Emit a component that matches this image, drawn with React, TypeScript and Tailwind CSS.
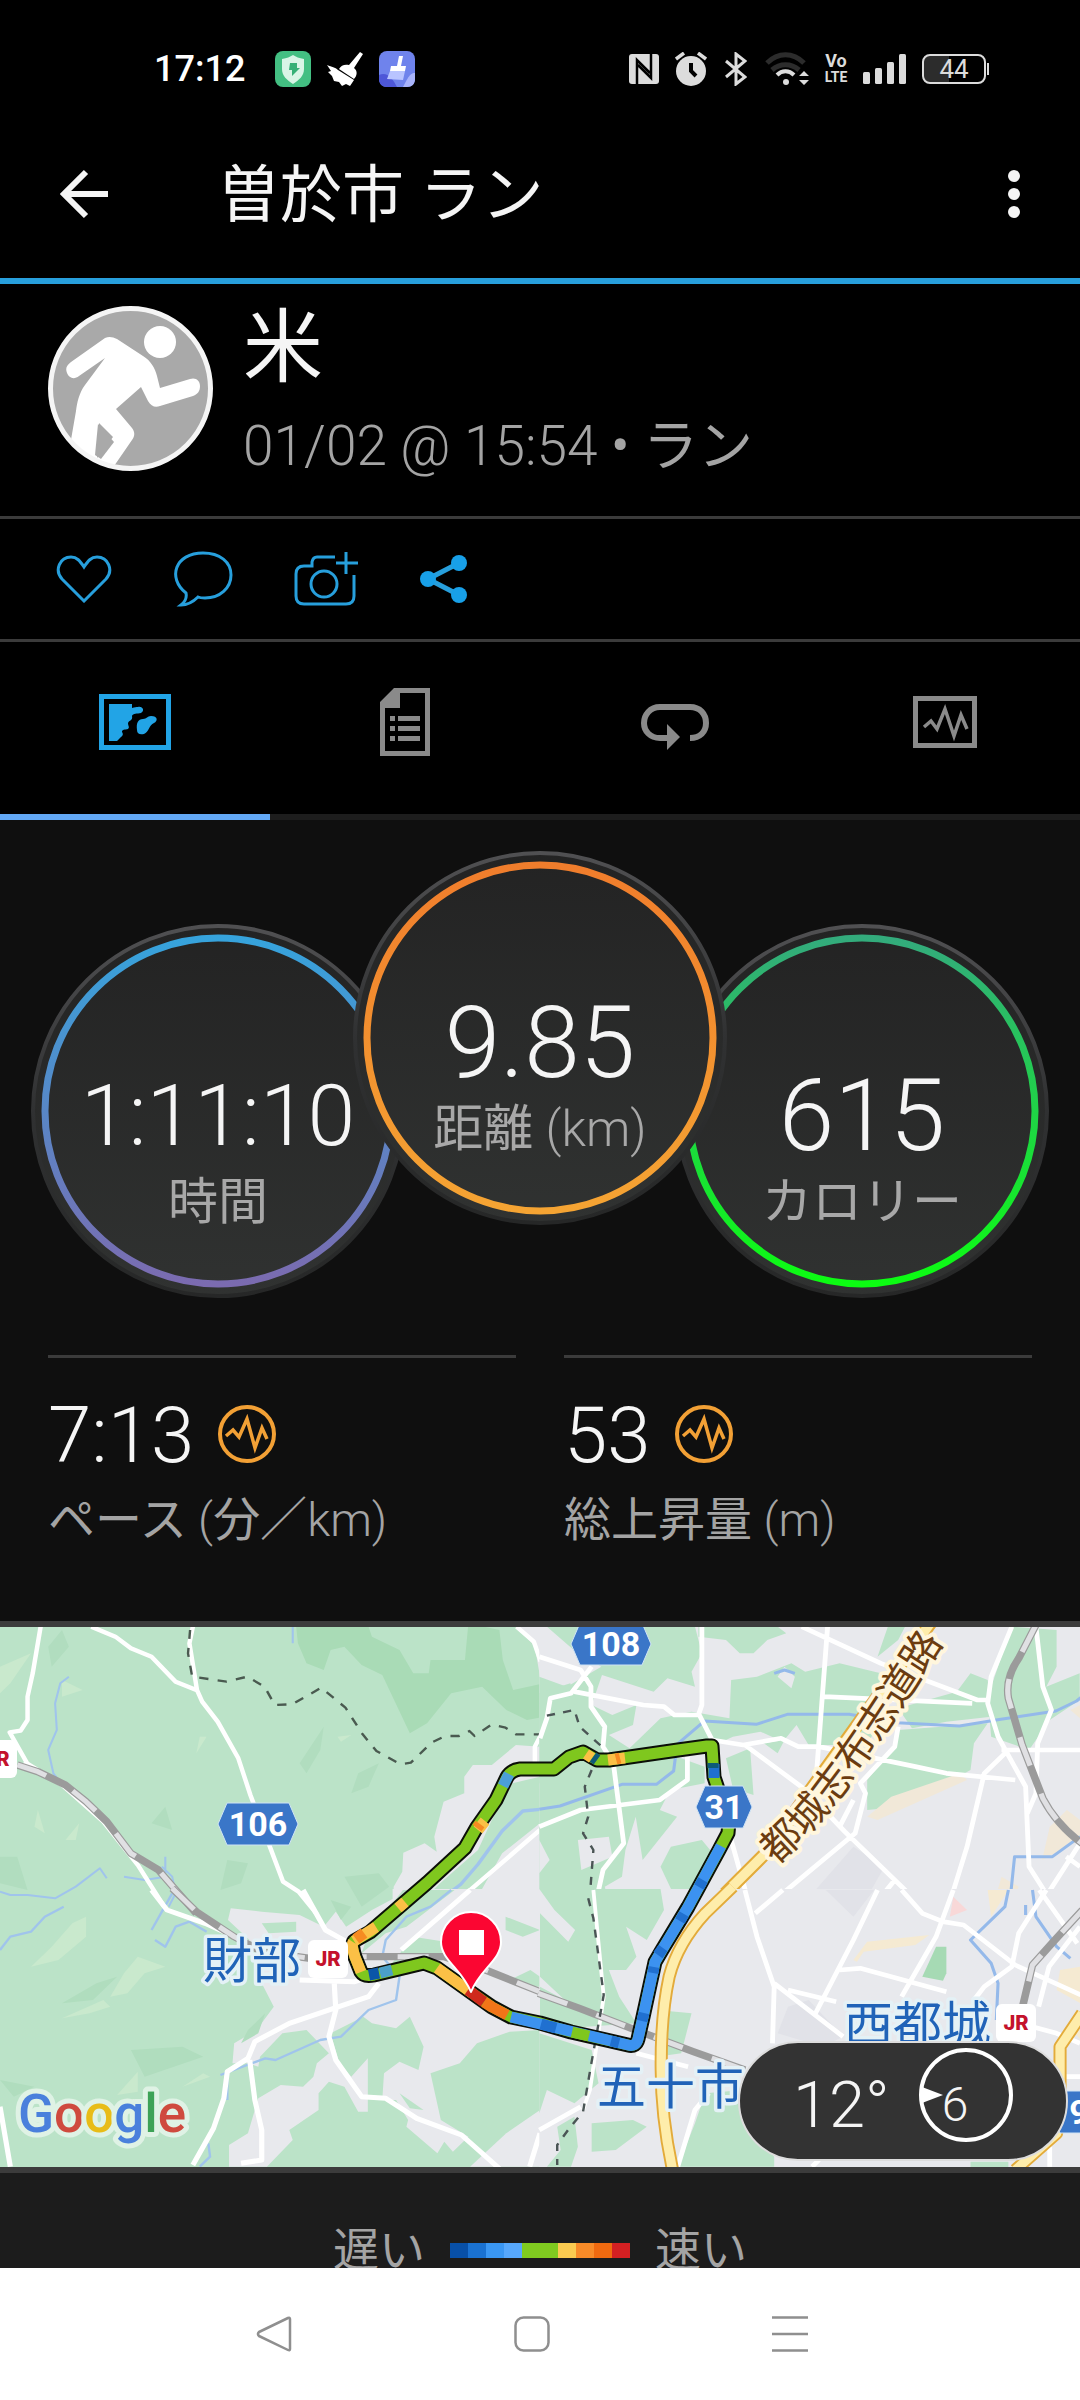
import React, { useState } from 'react';
import clsx from 'clsx';

// Latin runs are set light, Japanese runs stay regular
const MixedText: React.FC<{ children: string }> = ({ children }) => (
  <>
    {children.split(/([\x20-\x7e]+)/).map((part, i) => (
      <span key={i} className={i % 2 ? 'font-light' : 'font-normal'}>
        {part}
      </span>
    ))}
  </>
);

const RingStat: React.FC<{
  id: string;
  value: string;
  label: string;
  from: string;
  to: string;
  className?: string;
  valueClass?: string;
}> = ({ id, value, label, from, to, className, valueClass = 'text-[100px]' }) => (
  <div className={clsx('relative w-[374px] h-[374px] shrink-0', className)}>
    <svg viewBox="0 0 374 374" className="absolute inset-0 w-full h-full" aria-hidden="true">
      <defs>
        <linearGradient id={`${id}-ring`} x1="0" y1="0" x2="0" y2="1">
          <stop offset="0" stopColor={from} />
          <stop offset="1" stopColor={to} />
        </linearGradient>
        <linearGradient id={`${id}-fill`} x1="0" y1="0" x2="0" y2="1">
          <stop offset="0" stopColor="#232323" />
          <stop offset="1" stopColor="#303231" />
        </linearGradient>
        <linearGradient id={`${id}-edge`} x1="0" y1="0" x2="0" y2="1">
          <stop offset="0" stopColor="#505052" />
          <stop offset="0.5" stopColor="#303132" />
          <stop offset="1" stopColor="#262727" />
        </linearGradient>
      </defs>
      <circle cx="187" cy="187" r="185" fill={`url(#${id}-fill)`} stroke={`url(#${id}-edge)`} strokeWidth="4" />
      <circle cx="187" cy="187" r="173" fill="none" stroke={`url(#${id}-ring)`} strokeWidth="7" />
    </svg>
    <div className="relative flex flex-col items-center pt-[142px] whitespace-nowrap">
      <div className={clsx('leading-[100px] font-light text-[#f5f5f5]', valueClass)}>{value}</div>
      <div className="text-[50px] leading-[72px] text-[#a8a8a8]">
        <MixedText>{label}</MixedText>
      </div>
    </div>
  </div>
);

const SummaryStat: React.FC<{ value: string; label: string }> = ({ value, label }) => (
  <div className="flex-1 border-t-3 border-[#3b3b3b] pt-[38px] whitespace-nowrap">
    <div className="flex items-center gap-6">
      <span className="text-[78px] leading-[80px] font-light text-[#f5f5f5]">{value}</span>
      <button aria-label="グラフ" className="pb-1">
        <svg viewBox="0 0 58 58" className="w-[58px] h-[58px] block" fill="none" stroke="#f2a035">
          <circle cx="29" cy="29" r="27" strokeWidth="4" />
          <path d="M8 31l7-6 6 7 8-18 8 29 7-20 5 11" strokeWidth="3.5" />
        </svg>
      </button>
    </div>
    <div className="mt-2 text-[47px] leading-[72px] text-[#a4a4a4]">
      <MixedText>{label}</MixedText>
    </div>
  </div>
);

const StatusBar: React.FC = () => (
  <div className="flex items-center justify-between h-[110px] pt-7 pl-[154px] pr-[91px]">
    <div className="flex items-center">
      <span className="text-[36px] leading-10 font-medium text-white">17:12</span>
      <svg viewBox="0 0 36 36" className="w-9 h-9 ml-[30px]">
        <rect width="36" height="36" rx="8" fill="#43bf82" />
        <path d="M18 4c3 2 6 3 11 4v10c0 7-5 11-11 15C12 29 7 25 7 18V8c5-1 8-2 11-4z" fill="#d8f5e6" />
        <path d="M15 12h7v5h3l-8 8v-6h-3z" fill="#35b076" />
      </svg>
      <svg viewBox="0 0 36 36" className="w-9 h-9 ml-4" fill="#fff">
        <path d="M33 1l3 2-9 14c4 3 3 8 0 11L12 18c2-4 6-5 10-4z" />
        <path d="M0 14c5 2 8 2 11 5l16 10-4 6-4-2-4 2-3-4-5-1-2-5-4-4 3-1z" />
      </svg>
      <svg viewBox="0 0 36 36" className="w-9 h-9 ml-4">
        <rect width="36" height="36" rx="8" fill="#6f83ec" />
        <path d="M0 24c8-4 14 4 18 12H8c-5 0-8-3-8-8z" fill="#4d57d8" />
        <path d="M24 36c6-12 8-14 12-14v6c0 5-3 8-8 8z" fill="#a9b4fb" />
        <path d="M20 5h4l-2 10h5l-1 5H11l1-5h6z" fill="#fff" />
        <path d="M11 20h15l-2 9-16-1z" fill="#b9c4ff" />
      </svg>
    </div>
    <div className="flex items-center text-[#dcdcdc]">
      <svg viewBox="0 0 30 30" className="w-[30px] h-[30px]" fill="currentColor">
        <rect width="30" height="30" rx="3" />
        <path d="M8 30V6l13 13M22 0v24L9 11" fill="none" stroke="#000" strokeWidth="2.5" />
      </svg>
      <svg viewBox="0 0 32 34" className="w-8 h-[34px] ml-4" fill="currentColor">
        <circle cx="16" cy="19" r="15" />
        <path d="M1 7l8-6M31 7l-8-6" stroke="currentColor" strokeWidth="3.5" />
        <path d="M16 11v8l5 5" fill="none" stroke="#000" strokeWidth="4" />
      </svg>
      <svg viewBox="0 0 22 34" className="w-[22px] h-[34px] ml-[18px]" fill="none" stroke="currentColor" strokeWidth="3">
        <path d="M1 9l19 16-9 7V2l9 7L1 25" />
      </svg>
      <svg viewBox="0 0 45 34" className="w-[45px] h-[34px] ml-[18px]" fill="none" strokeWidth="5">
        <path d="M2 11c11-11 26-11 37 0" stroke="#2c2c2c" />
        <path d="M7 18c8-7 19-7 27 0" stroke="#2c2c2c" />
        <path d="M12 23c5-5 12-5 17 0" stroke="currentColor" strokeWidth="4" />
        <circle cx="21" cy="30" r="3" fill="currentColor" />
        <path d="M34 24l5-5 5 5zM34 28l5 5 5-5z" fill="currentColor" />
      </svg>
      <div className="ml-3 w-7 text-[18px] leading-[16px] font-bold text-center">
        <div>Vo</div>
        <div className="text-[14px]">LTE</div>
      </div>
      <svg viewBox="0 0 43 30" className="w-[43px] h-[30px] ml-[13px]" fill="currentColor">
        <rect x="0" y="18" width="7" height="12" rx="1.5" />
        <rect x="12" y="14" width="7" height="16" rx="1.5" />
        <rect x="24" y="8" width="7" height="22" rx="1.5" />
        <rect x="36" y="0" width="7" height="30" rx="1.5" />
      </svg>
      <div className="ml-4 flex items-center">
        <div className="w-16 h-[30px] rounded-lg border-2 border-current bg-linear-to-r from-[#2c2c2c] from-42% to-black to-42% text-[26px] leading-[26px] text-center">
          44
        </div>
        <div className="w-[2px] h-3 bg-current ml-px" />
      </div>
    </div>
  </div>
);

const RunnerAvatar: React.FC = () => (
  <svg viewBox="0 0 165 165" className="w-[165px] h-[165px] shrink-0">
    <clipPath id="avatar-clip">
      <circle cx="82.5" cy="82.5" r="80" />
    </clipPath>
    <circle cx="82.5" cy="82.5" r="80" fill="#a9a9a9" />
    <g clipPath="url(#avatar-clip)" fill="#fff">
      <circle cx="112" cy="36" r="16" />
      <path d="M57 32c4-2 8-1 12 1l26 17c8 5 12 12 14 20l3 12 30-9c6-2 10 2 10 7s-2 8-7 10l-33 10c-5 2-9 0-12-5l-7-14-25 22 16 19c3 4 3 8 0 12l-20 29-18 8-26-20 8-46c1-8 3-18 9-26l20-27-26 18c-5 4-10 2-12-3s0-8 4-11z" />
      <path d="M51 117l14 14-16 21z" fill="#a9a9a9" />
      <path d="M50 118l-3 31 6 4 13-17z" fill="#a9a9a9" />
    </g>
    <circle cx="82.5" cy="82.5" r="80" fill="none" stroke="#f5f5f5" strokeWidth="5" />
  </svg>
);

const tabs = [
  {
    label: '地図',
    icon: (
      <svg viewBox="0 0 72 56" className="w-[72px] h-14">
        <rect x="2.5" y="2.5" width="67" height="51" fill="none" stroke="currentColor" strokeWidth="5" />
        <path d="M10 10h23v4c3-1 4-1 6-1 5-1 7 4 3 6-4 1-8 0-9 3 1 5-3 4-4 7 0 3 2 4 0 6-3 1-6 0-6 3 2 3 0 4-2 6l-3 3h-8z" fill="currentColor" />
        <path d="M38 36c-1-7 1-11 6-11 4 0 4-3 8-3 7 0 7 5 3 7-5 2-5 9-10 11-4 1-7 0-7-4z" fill="currentColor" />
      </svg>
    ),
  },
  {
    label: '統計',
    icon: (
      <svg viewBox="0 0 50 68" className="w-[50px] h-[68px]" fill="currentColor">
        <path d="M14 0h36v68H0V14zM20 5v15H5v43h40V5z" fillRule="evenodd" />
        <path d="M10 28h5v5h-5zM18 28h22v5H18zM10 38h5v5h-5zM18 38h22v5H18zM10 48h5v5h-5zM18 48h22v5H18z" />
      </svg>
    ),
  },
  {
    label: 'ラップ',
    icon: (
      <svg viewBox="0 -10 68 58" className="w-[68px] h-[58px]">
        <path d="M27 35h-8C9 35 3 28 3 20S9 4 19 4h30c10 0 16 7 16 16s-6 15-16 15" fill="none" stroke="currentColor" strokeWidth="6" />
        <path d="M26 21l13 13-13 13z" fill="currentColor" />
      </svg>
    ),
  },
  {
    label: 'グラフ',
    icon: (
      <svg viewBox="0 0 64 52" className="w-16 h-[52px]" fill="none" stroke="currentColor">
        <rect x="2.5" y="2.5" width="59" height="47" strokeWidth="5" />
        <path d="M11 31l7-6 6 8 8-20 9 27 7-21 6 14" strokeWidth="3.5" />
      </svg>
    ),
  },
];

const Shield: React.FC<{ x: number; y: number; w: number; label: string }> = ({ x, y, w, label }) => (
  <g transform={`translate(${x} ${y})`}>
    <path
      d={`M${-w} 0l9-21h${2 * w - 18}l9 21-9 21h${18 - 2 * w}z`}
      fill="#3a76c8"
      stroke="#cfe3f4"
      strokeWidth="1"
    />
    <text y="12" textAnchor="middle" fontSize="34" fontWeight="700" fill="#fff">
      {label}
    </text>
  </g>
);

const Station: React.FC<{ x: number; y: number }> = ({ x, y }) => (
  <g transform={`translate(${x} ${y})`}>
    <rect x="-20" y="-19" width="40" height="38" rx="6" fill="#fff" />
    <text y="7" textAnchor="middle" fontSize="20" fontWeight="800" fontFamily="Inter, sans-serif" fill="#c4122c">
      JR
    </text>
  </g>
);

const rail = (d: string) => (
  <>
    <path d={d} stroke="#9b9b9b" strokeWidth="22" />
    <path d={d} stroke="#e0e0e3" strokeWidth="15" strokeDasharray="90 90" />
  </>
);

const ROUTE =
  'M712 119L707 119L678 123L609 133L597 133L583 125L569 130L554 142L520 142Q511 143 507 150L496 173L477 200L465 221L427 256L370 305L354 314Q351 318 355 330L361 345Q364 350 374 348L424 336L437 341L472 366L492 380L511 390L540 396L571 405L628 418Q636 420 638 412L643 390L655 335L662 323L688 280L719 223L728 206L729 195L714 150Z';

const RouteMap: React.FC = () => (
  <svg
    viewBox="0 0 1080 540"
    preserveAspectRatio="xMidYMid slice"
    className="block w-full h-[540px] bg-[#bbe3c8]"
    fill="none"
    strokeLinejoin="round"
    fontFamily="Roboto, 'Noto Sans CJK JP', sans-serif"
    role="img"
    aria-label="ルートマップ"
  >
    {/* north-west tile */}
    <g transform="translate(0 -17) scale(0.3444 0.3333)">
      <path d="M860 50l5 50 25 60 50 20 20-60 40-10 50 55 60 30 80 175 50-30 70-90 90-20 70 70 60 30 50-10v-100l-90 20-30-90-10-90-90-20-10 110-100 0-5 40h-45l-40-70-80-40-10-30z" fill="#a9dbb6" />
      <path d="M940 350l-70 110 20 30 40-70zM660 750l-20 90 60-20 20-60zM1000 800l100-10 30 40-80 60zM480 590l-40 50 60 20zM1040 490l60-30-30 70-50 20zM0 740l50 0 30 100-80-20zM180 60l20 50-50 60-10-60z" fill="#b1ddbf" />
      <path d="M0 170l90-40-60 90-30 30zM180 210l60 30-60 20zM110 600l20 70-30-20zM580 380l20 0-30 50zM230 640l-40 50 30 0zM980 380l40-5-30 20z" fill="#c9e9cd" />
      <path d="M1568 410l-70-5-70 60h-55l-25 35v50l-60 25-27 105 7 45-35-25-62 28-3 57-25 45v70h430z" fill="#e8e9ed" />
      <path d="M1568 500l-80 20-60 110-40 90-110 100-80 80h120l80-60 60-110 110-90z" fill="#bbe3c8" />
      <path d="M1568 50h-65l50 60 15 90z" fill="#e8e9ed" />
      <path d="M850 50v50M200 200l-25 20-15 60 5 80-25 60 15 70 15 20M0 845l30 10 50 0 80 10 60-35 70-55 20 30M360 800l60 10 60-10v-60M490 890l20-40-10-50-30-30" stroke="#a0c4ec" strokeWidth="6" />
      <path d="M1568 598l-50 5-60 60-70 100-50 60-90 70-50 10" stroke="#a0c4ec" strokeWidth="10" />
      <path d="M118 50L95 190l-15 70v70l-20 32-32 5 52 95M265 50l70 30 45 35 60 25 70 75 60 25M560 50l-10 50 22 140 15 35 45 60 60 110 35 110 95 260 45 30 55 70M70 455l110 70 120 110 100 130 80 130M1568 660l-270 240M1500 50l50 45 20 60M1568 380l-15 30v55" stroke="#fff" strokeWidth="13" />
      {rail('M50 465l60 20 80 40 60 50 60 60 70 95 80 50 50 60 60 70')}
      <path d="M552 60l-6 70 12 70 100 15 60-15 50 30 30 55 50-2 85-50 70 60 50 80 40 50 70 40 30-5 60-60 40-20h40l30-15 15 15 50-35 40 10 30 20h120" stroke="#4a5a50" strokeWidth="7" strokeDasharray="27 27" />
    </g>

    {/* north-east tile */}
    <g transform="translate(540 -17) scale(0.3444 0.3333)">
      <path d="M-2 50h1572v860H-2z" fill="#e8e9ed" />
      <path d="M20 50h430l20 80-30 55 10 45-80-25-40 40-150-50-30 90 60 30 70-30-10 60-70 30 60 40 90-90 90-20 110 20 5-115 75-10 100-40 40 25 100-25 140 35-30 150-30 60H780l-35-60-40 50-65-30-80 15-40 20-140 30-200 40L-2 520V200l80 30 100-60-80-50z" fill="#bbe3c8" />
      <path d="M-2 250l90-30 20 60-80 50-30 60zM460 80l80 10 40 40h40l40-40 55-20-25-20H460zM1040 90l-60 50 30-90h50zM1040 360l260-20-40 60-10 80-70 40-130 70-100 10v-90l80-100zM1250 190l50 20 10 110-130 15-100 20-40-60 170-50zM1370 50l130 10v110l-30 60 97-40v80l-87 60-60 90-110-40-10-120zM650 400l60-10-20 40zM540 445l70-30 10 140-60-20z" fill="#bbe3c8" />
      <path d="M-2 470l400-30 80 30v50l-100 20-30 60 50 20-100 130-20-130-30 100-10 80-50 30 10 40 160-30 0 70H-2z" fill="#bbe3c8" />
      <path d="M-2 690l30 60-30 40zM110 690l90-10 10 60-90 40zM690 200l20-30 30 30-10 35z" fill="#e8e9ed" />
      <path d="M350 770l30-60 90-20 40 50-60 120-50 20z" fill="#bbe3c8" />
      <path d="M1020 560l200-70 20 20-260 120-30-10zM1480 650l50-50 38 30v60l-110 60zM1340 800l50 30-40 80h-40zM1540 300l28-15v40z" fill="#f1e8d8" />
      <path d="M910 710l90 60-60 110-140-40z" fill="#e1e2e8" />
      <path d="M1180 900l20-40 40 40z" fill="#f8d8d8" />
      <path d="M-2 598l60-10 180-65h100l50-40 10-80 80-70 150 10 90-30h180l140 25 180 10 120-20 160-25 60-30 70-60M680 190l30-10 30 10M1568 680l-80 60h-110l-10 100-30 70" stroke="#94b9ea" strokeWidth="9" />
      <path d="M-2 140l120 40 30 50v60l40 60-5 60 30 50 30 240-60 80-30 140M150 170l-60 80-60 15-10 60-20 60M100 245l200 40 60 5 30 25h70l10-30V50M460 310l40 80 90 15 110-20 50 25 60 0 280 60 90 20 200 20M-2 650l120-50 230-30 80-60v-70M595 405l170 130 120 130 240 240M835 50l-35 480M760 50l230 110 280 110h30M825 260l430 20M1370 50l-60 150-10 80 30 100 80 150 10 240 80 130M1340 420h230M1350 430l-60 60-50 220-60 200M1440 50l20 180 25 70-40 100-5 150-25 60M1040 350l-10 60-100 110 15 30-30 120-280 240M870 650l40-80M555 690l60 220M1030 810l-70 90M1568 700l-130 210M1568 770l-40-30" stroke="#fff" strokeWidth="14" />
      {rail('M1440 45l-50 100q-40 60-30 120l40 140 60 160q40 80 120 140')}
      <path d="M20 317l80-17 15 50 70 65M150 480l-20 50 10 90-15 50 30 50-12 160" stroke="#4a5555" strokeWidth="7" strokeDasharray="24 24" />
      <path d="M1140 30L650 735L480 910" stroke="#e3ab3a" strokeWidth="40" />
      <path d="M1140 30L650 735L480 910" stroke="#feedab" strokeWidth="28" />
    </g>

    {/* south-west tile */}
    <g transform="translate(0 263) scale(0.3444 0.3333)">
      <path d="M1140-3v30l-60 33-75 50-30-45-35 45-70-35-110-10-90-10-8 35 83 80 15 110 35 70-50 70-65 40-5 60h45l30 10 5-30 65-70 70-10 65 70-35 30-10 40-30 30-65-5-65 40-30 105-55 35v65h110l75-80-10-30 85-60v-50l30-35 45 15 40 75h28v-35h82l35 60-5 20 90 80 20-35 25 30 45-45-80-50-30-140 85-30 50-60 95-35 90-5V-3z" fill="#e8e9ed" />
      <path d="M960 430l95-50 25 20 70 15 40-35 40 90-15 70-55-25-45 35-5 80h-42V505l-48 55-35-40zM760 100l100-5v30l-80 5zM1480 270l60-30 28 20v30h-60zM1170 0l150 0-140 110-60 20-70 60 20-60zM1200 140l120 20 20 70-100-40-110 40zM1160 610l70 50-40-5zM1568 120l-50 20-50-20v-40z" fill="#bbe3c8" />
      <path d="M1365 830l105-100 98-70v170z" fill="#e8e9ed" />
      <path d="M770 370l-20 60-50 30 20-40zM380 480l150-10 60 30-170 60zM0 570l100 20-60 30zM960 30l60 20-30 40zM180 340l100-60 60-20-70 70z" fill="#b0ddbe" />
      <path d="M210 100l40-20v60l-80 70-80 20 60-60zM400 200l80 30-60 20-50 60-50 10 40-70zM300 330l20 20-60 20-80 15zM400 545l-60 70 60-10zM590 550l20 10-80 30z" fill="#c9e9cd" />
      <path d="M0 180l30-40 60-15 40-45 55-30M450 150l30 20 30-60 40-15 50 30M440 120l60-110M1310 0l-60 50-70 30-60 70-10 50 50 60-10 70-80 30-80 80-60 10-130 60-30-5-130 50M660 550v80M605 760l5 40-30 30" stroke="#a0c4ec" strokeWidth="7" />
      <path d="M440 0l45 60 110 40 130 60M880 0l65 120 70 40M1365 0l-200 180M870 270l160 5 60-20M970 270l5 90-20 80 20 70 75 110 70 5 90 60 130 50 120 110M1100 280l-30 40-230 80-100 55-20 50-60 40-10 80-30 90-60 110M725 510l15 120 20 90v90l-60 10M0 650l30 180M1568 730l-30 100" stroke="#fff" strokeWidth="15" />
      {rail('M500-5l70 70 110 75 80 45 140 20 150-5 240 0 120 40 170 70')}
    </g>

    {/* south-east tile */}
    <g transform="translate(540 263) scale(0.3444 0.3333)">
      <path d="M-2-3h1572v840H-2z" fill="#e8e9ed" />
      <path d="M-2-3h352l10 63-50 90-60-40 30 90-30 40h-50l30 80 50 80-280 20V290l72 40-72-70V70l82 85 20-35-60-60zM340 360l100 10-30 120-70 10zM-2 430l152 50 20 100-70 60-80-40-22 70zM50 710l50-30 10 90-20 60H20l40-50zM150 700l120-10 40 20-90 70-70 5zM480 610l110-10 50 140 40 60v30H400l50-130zM1250 815h110v20h-110z" fill="#bbe3c8" />
      <path d="M1150 170h30v80l-10 22-60-12z" fill="#a6dab4" />
      <path d="M1300 0h60l-50 80zM910 210l40-55 180-20-40 30-150 20-20 30zM1510 240l60-10v110l-70-40zM1530 400l40 20v30z" fill="#f5ead2" />
      <path d="M1200 20l40 40-50 20z" fill="#f8d8d8" />
      <path d="M720 350l60-20 100 110-60 30-130-40zM830 0h140l-60 80z" fill="#e1e2e8" />
      <path d="M1360 0l-10 50-100 100 60 70 20 60-5 110M1410 45v30M1430 0l10 80 60 90 40 35" stroke="#94b9ea" strokeWidth="9" />
      <path d="M595 0l35 140 50 150-5 170M680 280l200 160M720 300l140 35M625 70l80-70M980 0l-70 150-110 220M870 240l60-5 250 70M1050 0l60 70 60 25 60 10 150 120 190 90M1200 0l-50 140-100 180M1470 0l-80 130-20 100-80 60-30 40M1450 0l110 160M1568 110l-90 120-30 120M1430 410l70 20 68 30M280 490l150 40M400 830l50-170 40-50M-2 720l120-70M1480 770v60M790 830l20-20M1568 560l-50 0" stroke="#fff" strokeWidth="14" />
      <path d="M155 0l30 320-40 280-20 60" stroke="#fff" strokeWidth="11" />
      {rail('M-5 310l120 45 150 60 180 70 150 55')}
      {rail('M1575 60l-80 90-65 75-30 130')}
      <path d="M140 25l15 60 30 230-35 200-25 150-40 50-35 50v60" stroke="#4a5555" strokeWidth="7" strokeDasharray="24 24" />
      <path d="M560-10L480 70Q400 160 375 260Q350 380 352 540Q352 680 385 840M1575 370L1510 470L1510 600L1500 730L1380 840" stroke="#e3ab3a" strokeWidth="38" />
      <path d="M560-10L480 70Q400 160 375 260Q350 380 352 540Q352 680 385 840M1575 370L1510 470L1510 600L1500 730L1380 840" stroke="#feedab" strokeWidth="27" />
    </g>

    {/* pace-coloured track */}
    <path d={ROUTE} stroke="#0b0f08" strokeWidth="15" />
    <path d={ROUTE} stroke="#7fc71e" strokeWidth="11" />
    <g strokeWidth="11">
      <path d="M721 219L688 280L662 323L655 335L643 390L638 412Q636 420 628 418L511 390" stroke="#3c92f0" />
      <path d="M714 151v-14M703 253l-4 7M684 287l-4 7M663 321l-5 7M654 340l-1 6M644 386l-2 8M556 401l-15-4M619 416l-8-2" stroke="#2070d0" />
      <path d="M713 136v5M597 133l-4-3" stroke="#0e5a78" />
      <path d="M572 405l17 4" stroke="#7fc71e" />
      <path d="M353 315Q351 318 355 330L361 345M354 314L376 300M398 281l7-6M437 341L472 366M485 194L478 203M592 131l-6-4M608 133l17-2" stroke="#fbc046" />
      <path d="M356 312l8-6M477 201l3-4M616 132l4-1" stroke="#f68b22" />
      <path d="M509 147l-6 12" stroke="#4b9fd8" />
      <path d="M369 348l10-2" stroke="#0b55a8" />
      <path d="M380 346l12-3" stroke="#4b9fc8" />
      <path d="M468 363l16 12" stroke="#cf2a1c" />
      <path d="M484 375l8 5 15 8" stroke="#f27518" />
    </g>

    <g fontSize="49" fill="#2063b8" stroke="#e4f1f6" strokeWidth="7" paintOrder="stroke">
      <text x="203" y="351">財部</text>
      <text x="597" y="477">五十市</text>
      <text x="844" y="415">西都城</text>
    </g>
    <Station x={-3} y={132} />
    <Station x={328} y={332} />
    <Station x={1016} y={396} />

    <Shield x={258} y={197} w={40} label="106" />
    <Shield x={611} y={17} w={40} label="108" />
    <Shield x={724} y={180} w={28} label="31" />
    <Shield x={1079} y={485} w={28} label="9" />

    <path id="highway" d="M776 238C834 188 866 136 966-20" />
    <text fontSize="40" fill="#6b3c10" stroke="#fff6dc" strokeWidth="8" paintOrder="stroke">
      <textPath href="#highway">都城志布志道路</textPath>
    </text>

    <path d="M471 365C462 342 441 333 441 315a30 30 0 0 1 60 0c0 18-21 27-30 50z" fill="#fb0632" stroke="#fff" strokeWidth="2" />
    <path d="M459 303h25v25h-25z" fill="#fff" />

    <text x="18" y="505" fontSize="53" fontWeight="500" stroke="#dff2e5" strokeWidth="10" paintOrder="stroke">
      <tspan fill="#4a80dc">G</tspan>
      <tspan fill="#cf4a3e">o</tspan>
      <tspan fill="#e8bc18">o</tspan>
      <tspan fill="#4a80dc">g</tspan>
      <tspan fill="#3da257">l</tspan>
      <tspan fill="#cf4a3e">e</tspan>
    </text>
  </svg>
);

const paceColors = [
  'bg-[#0850a8]',
  'bg-[#1a72d2]',
  'bg-[#3a97f3]',
  'bg-[#57a8fc]',
  'bg-[#80cb20]',
  'bg-[#80cb20]',
  'bg-[#fbcb50]',
  'bg-[#f88b28]',
  'bg-[#f06a10]',
  'bg-[#d42022]',
];

export default function App() {
  const [activeTab, setActiveTab] = useState(0);

  return (
    <div className="min-h-screen flex flex-col bg-black overflow-x-hidden font-['Roboto','Noto_Sans_CJK_JP',sans-serif]">
      <StatusBar />

      <header className="flex items-center h-[174px] pl-[60px] pr-[60px] border-b-6 border-[#279fdc]">
        <button aria-label="戻る">
          <svg viewBox="0 0 50 50" className="w-[50px] h-[50px] block" fill="none" stroke="#f5f5f5" strokeWidth="6">
            <path d="M48 25H5M26 3L4 25l22 22" />
          </svg>
        </button>
        <h1 className="ml-27 pt-1 flex-1 text-[62px] leading-[80px] text-[#f5f5f5]">曽於市 ラン</h1>
        <button aria-label="メニュー">
          <svg viewBox="0 0 12 50" className="w-3 h-[50px] block" fill="#f5f5f5">
            <circle cx="6" cy="7" r="6" />
            <circle cx="6" cy="25" r="6" />
            <circle cx="6" cy="43" r="6" />
          </svg>
        </button>
      </header>

      <section className="flex gap-[30px] h-[235px] pt-[22px] pl-12 border-b-3 border-[#3b3b3b]">
        <RunnerAvatar />
        <div>
          <div className="text-[80px] leading-[84px] text-[#f5f5f5]">米</div>
          <div className="mt-4 text-[55px] leading-[80px] text-[#a4a4a4]">
            <MixedText>01/02 @ 15:54 • ラン</MixedText>
          </div>
        </div>
      </section>

      <div className="flex items-center h-[123px] pl-14 border-b-3 border-[#3b3b3b] text-[#279fdc]">
        <button aria-label="いいね">
          <svg viewBox="0 0 56 48" className="w-14 h-12 block" fill="none" stroke="currentColor" strokeWidth="3">
            <path d="M28 46L6 24C-2 15 4 2 15 2c6 0 9 4 13 10 4-6 7-10 13-10 11 0 17 13 9 22z" />
          </svg>
        </button>
        <button aria-label="コメント" className="ml-[61px]">
          <svg viewBox="0 0 60 56" className="w-15 h-14 block" fill="none" stroke="currentColor" strokeWidth="3">
            <path d="M13 42C-6 27 2 2 30 2c17 0 28 9 28 22S47 47 32 47c-3 0-5 0-7-1-4 4-9 8-17 8 4-3 6-7 5-12z" />
          </svg>
        </button>
        <button aria-label="写真を追加" className="ml-[61px]">
          <svg viewBox="0 0 64 56" className="w-16 h-14 block" fill="none" stroke="currentColor" strokeWidth="3">
            <path d="M41 6H23q-4 0-5 5v4H10q-8 0-8 8v22q0 8 8 8h42q8 0 8-8V24M52 1v22M42 12h22" />
            <circle cx="30" cy="33" r="13" />
          </svg>
        </button>
        <button aria-label="共有" className="ml-[61px]">
          <svg viewBox="0 0 48 48" className="w-12 h-12 block" fill="#18a0e8" stroke="currentColor" strokeWidth="5">
            <path d="M40 8L9 24l31 16" fill="none" />
            <circle cx="40" cy="8" r="8" stroke="none" />
            <circle cx="9" cy="24" r="8" stroke="none" />
            <circle cx="40" cy="40" r="8" stroke="none" />
          </svg>
        </button>
      </div>

      <div role="tablist" className="grid grid-cols-4">
        {tabs.map((tab, i) => (
          <button
            key={tab.label}
            role="tab"
            aria-label={tab.label}
            aria-selected={i === activeTab}
            onClick={() => setActiveTab(i)}
            className={clsx(
              'h-[178px] pb-3 flex items-center justify-center border-b-6',
              i === activeTab ? 'text-[#22a4e6] border-[#62a8f5]' : 'text-[#8a8a8a] border-[#1d1d1d]'
            )}
          >
            {tab.icon}
          </button>
        ))}
      </div>

      <section className="bg-[#0f0f0f] pt-[31px]">
        <div className="flex justify-center">
          <RingStat id="time" value="1:11:10" label="時間" from="#36a3dc" to="#7b6bb0" className="mt-[73px]" valueClass="text-[86px]" />
          <RingStat id="distance" value="9.85" label="距離 (km)" from="#f07d2c" to="#f5a433" className="z-10 -mx-[52px]" />
          <RingStat id="calories" value="615" label="カロリー" from="#33ab7c" to="#0cfc12" className="mt-[73px]" />
        </div>
        <div className="flex gap-12 px-12 pt-[57px] pb-[65px]">
          <SummaryStat value="7:13" label="ペース (分／km)" />
          <SummaryStat value="53" label="総上昇量 (m)" />
        </div>
      </section>

      <section className="relative border-y-6 border-[#3c3c3c]">
        <RouteMap />
        <div className="absolute right-3 bottom-1.5 w-[330px] h-[120px] pl-[53px] pr-[52px] flex items-center justify-between rounded-full bg-[#333] border-2 border-[#ddd] font-light text-[#f5f5f5]">
          <span className="mt-2 text-[65px] leading-[80px]">12°</span>
          <svg viewBox="0 0 96 96" className="w-24 h-24 mb-3" fill="none" fontFamily="Roboto, sans-serif">
            <circle cx="48" cy="48" r="45" stroke="#fff" strokeWidth="4" />
            <path d="M4 40l21 8-21 8z" fill="#fff" />
            <text x="37" y="74" textAnchor="middle" fontSize="48" fill="#f5f5f5">
              6
            </text>
          </svg>
        </div>
      </section>

      <div className="h-[95px] overflow-hidden bg-[#1c1c1c] pt-[45px]">
        <div className="flex items-center justify-center gap-[25px] text-[46px] leading-[64px] text-[#a4a4a4]">
          <span>遅い</span>
          <div className="flex">
            {paceColors.map((color, i) => (
              <div key={i} className={clsx('w-[18px] h-[15px]', color)} />
            ))}
          </div>
          <span>速い</span>
        </div>
      </div>

      <nav className="flex-1 min-h-[132px] bg-white flex items-center justify-center gap-[222px] pr-4">
        <button aria-label="戻る">
          <svg viewBox="0 0 36 36" className="w-9 h-9 block" fill="none" stroke="#8f8f8f" strokeWidth="2.5" strokeLinejoin="round">
            <path d="M34 3v30q0 2-2 1L3 20q-2-2 0-4L32 2q2-1 2 1z" />
          </svg>
        </button>
        <button aria-label="ホーム">
          <svg viewBox="0 0 36 36" className="w-9 h-9 block" fill="none" stroke="#8f8f8f" strokeWidth="2.5">
            <rect x="1.5" y="1.5" width="33" height="33" rx="8" />
          </svg>
        </button>
        <button aria-label="アプリ一覧">
          <svg viewBox="0 0 36 36" className="w-9 h-9 block" stroke="#8f8f8f" strokeWidth="2.5">
            <path d="M0 1.5h36M0 18h36M0 34.5h36" />
          </svg>
        </button>
      </nav>
    </div>
  );
}
